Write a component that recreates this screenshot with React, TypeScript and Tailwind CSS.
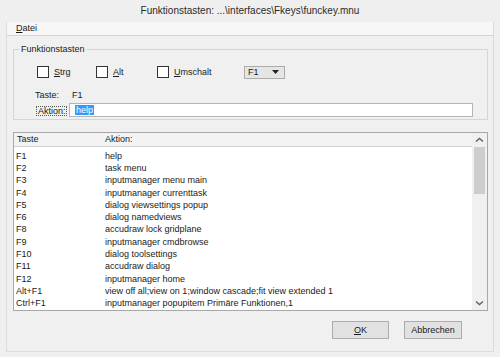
import React from "react";

const rows: [string, string][] = [
  ["F1", "help"],
  ["F2", "task menu"],
  ["F3", "inputmanager menu main"],
  ["F4", "inputmanager currenttask"],
  ["F5", "dialog viewsettings popup"],
  ["F6", "dialog namedviews"],
  ["F8", "accudraw lock gridplane"],
  ["F9", "inputmanager cmdbrowse"],
  ["F10", "dialog toolsettings"],
  ["F11", "accudraw dialog"],
  ["F12", "inputmanager home"],
  ["Alt+F1", "view off all;view on 1;window cascade;fit view extended 1"],
  ["Ctrl+F1", "inputmanager popupitem Primäre Funktionen,1"],
];

const Check = ({ hot, rest, w }: { hot: string; rest: string; w: string }) => (
  <div className={`flex items-center gap-[5px] ${w}`}>
    <div className="w-[12px] h-[12px] border border-[#333] bg-white" />
    <span>
      <span className="underline">{hot}</span>
      {rest}
    </span>
  </div>
);

const Chevron = ({ down }: { down?: boolean }) => (
  <svg width="9" height="6" viewBox="0 0 9 6" className="text-[#606060]">
    <path
      d={down ? "M1 1.5 4.5 4.5 8 1.5" : "M1 4.5 4.5 1.5 8 4.5"}
      fill="none"
      stroke="currentColor"
      strokeWidth="1.4"
    />
  </svg>
);

export default function App() {
  return (
    <div className="w-[500px] h-[357px] bg-[#efefef] flex flex-col overflow-hidden font-['Liberation_Sans',Arial,sans-serif] text-[9px] text-[#1a1a1a] leading-none">
      {/* title bar */}
      <div className="h-[22px] shrink-0 flex items-center justify-center text-[10px] text-[#2a2a2a]">
        Funktionstasten: ...\interfaces\Fkeys\funckey.mnu
      </div>

      <div className="flex-1 mx-[6px] mb-[5px] border-x border-b border-[#dcdcdc] flex flex-col bg-[#f0f0f0]">
        {/* menu */}
        <div className="h-[14px] shrink-0 bg-[#f7f7f7] border-b border-[#d4d4d4] flex items-center pl-[9px]">
          <span>
            <span className="underline">D</span>atei
          </span>
        </div>

        {/* group box */}
        <div className="relative mt-[13px] ml-[6px] mr-[5px] h-[71px] border border-[#d5d5d5]">
          <span className="absolute left-[5px] -top-[5px] px-[2px] bg-[#f0f0f0]">Funktionstasten</span>

          <div className="flex items-center mt-[16px] pl-[23px] h-[12px]">
            <Check hot="S" rest="trg" w="w-[59px]" />
            <Check hot="A" rest="lt" w="w-[61px]" />
            <Check hot="U" rest="mschalt" w="w-[87px]" />
            <div className="w-[41px] h-[13px] border border-[#acacac] bg-[#e5e5e5] flex items-center justify-between pl-[3px] pr-[5px]">
              <span>F1</span>
              <svg width="7" height="4" viewBox="0 0 7 4">
                <path d="M0 0h7L3.5 4z" fill="#222" />
              </svg>
            </div>
          </div>

          <div className="flex items-center mt-[11px] pl-[21px] h-[12px]">
            <span className="w-[37px]">Taste:</span>
            <span>F1</span>
          </div>

          <div className="flex items-center mt-[2px] pl-[22px] h-[14px]">
            <div className="w-[31px] h-[10px] mt-[2px] border border-dotted border-[#555] flex items-center px-[1px]">
              Aktion:
            </div>
            <div className="ml-[2px] w-[404px] h-[14px] border border-[#b5b5b5] bg-white flex items-center pl-[5px]">
              <span className="bg-[#3399ff] text-white px-[1px] h-[10px] flex items-center">help</span>
            </div>
          </div>
        </div>

        {/* list */}
        <div className="mt-[12px] ml-[6px] mr-[5px] h-[179px] border border-[#a8a8a8] bg-white flex">
          <div className="flex-1 flex flex-col">
            <div className="h-[14px] bg-[#f3f3f3] border-b border-[#d0d0d0] flex items-center">
              <span className="w-[91px] pl-[3px]">Taste</span>
              <span>Aktion:</span>
            </div>
            <div className="pt-[3px]">
              {rows.map(([k, a]) => (
                <div key={k} className="h-[12.3px] flex items-center">
                  <span className="w-[91px] pl-[2px]">{k}</span>
                  <span className="whitespace-nowrap">{a}</span>
                </div>
              ))}
            </div>
          </div>
          <div className="w-[15px] bg-[#f0f0f0] flex flex-col items-center">
            <div className="h-[14px] flex items-center justify-center">
              <Chevron />
            </div>
            <div className="w-[11px] h-[47px] bg-[#cdcdcd]" />
            <div className="flex-1" />
            <div className="h-[14px] flex items-center justify-center">
              <Chevron down />
            </div>
          </div>
        </div>

        {/* buttons */}
        <div className="mt-[10px] flex gap-[15px] pl-[325px]">
          <button className="w-[57px] h-[18px] border border-[#adadad] bg-[#e1e1e1] text-[9px] flex items-center justify-center">
            <span>
              <span className="underline">O</span>K
            </span>
          </button>
          <button className="w-[58px] h-[18px] border border-[#adadad] bg-[#e1e1e1] text-[9px] flex items-center justify-center">
            Abbrechen
          </button>
        </div>
      </div>
    </div>
  );
}
